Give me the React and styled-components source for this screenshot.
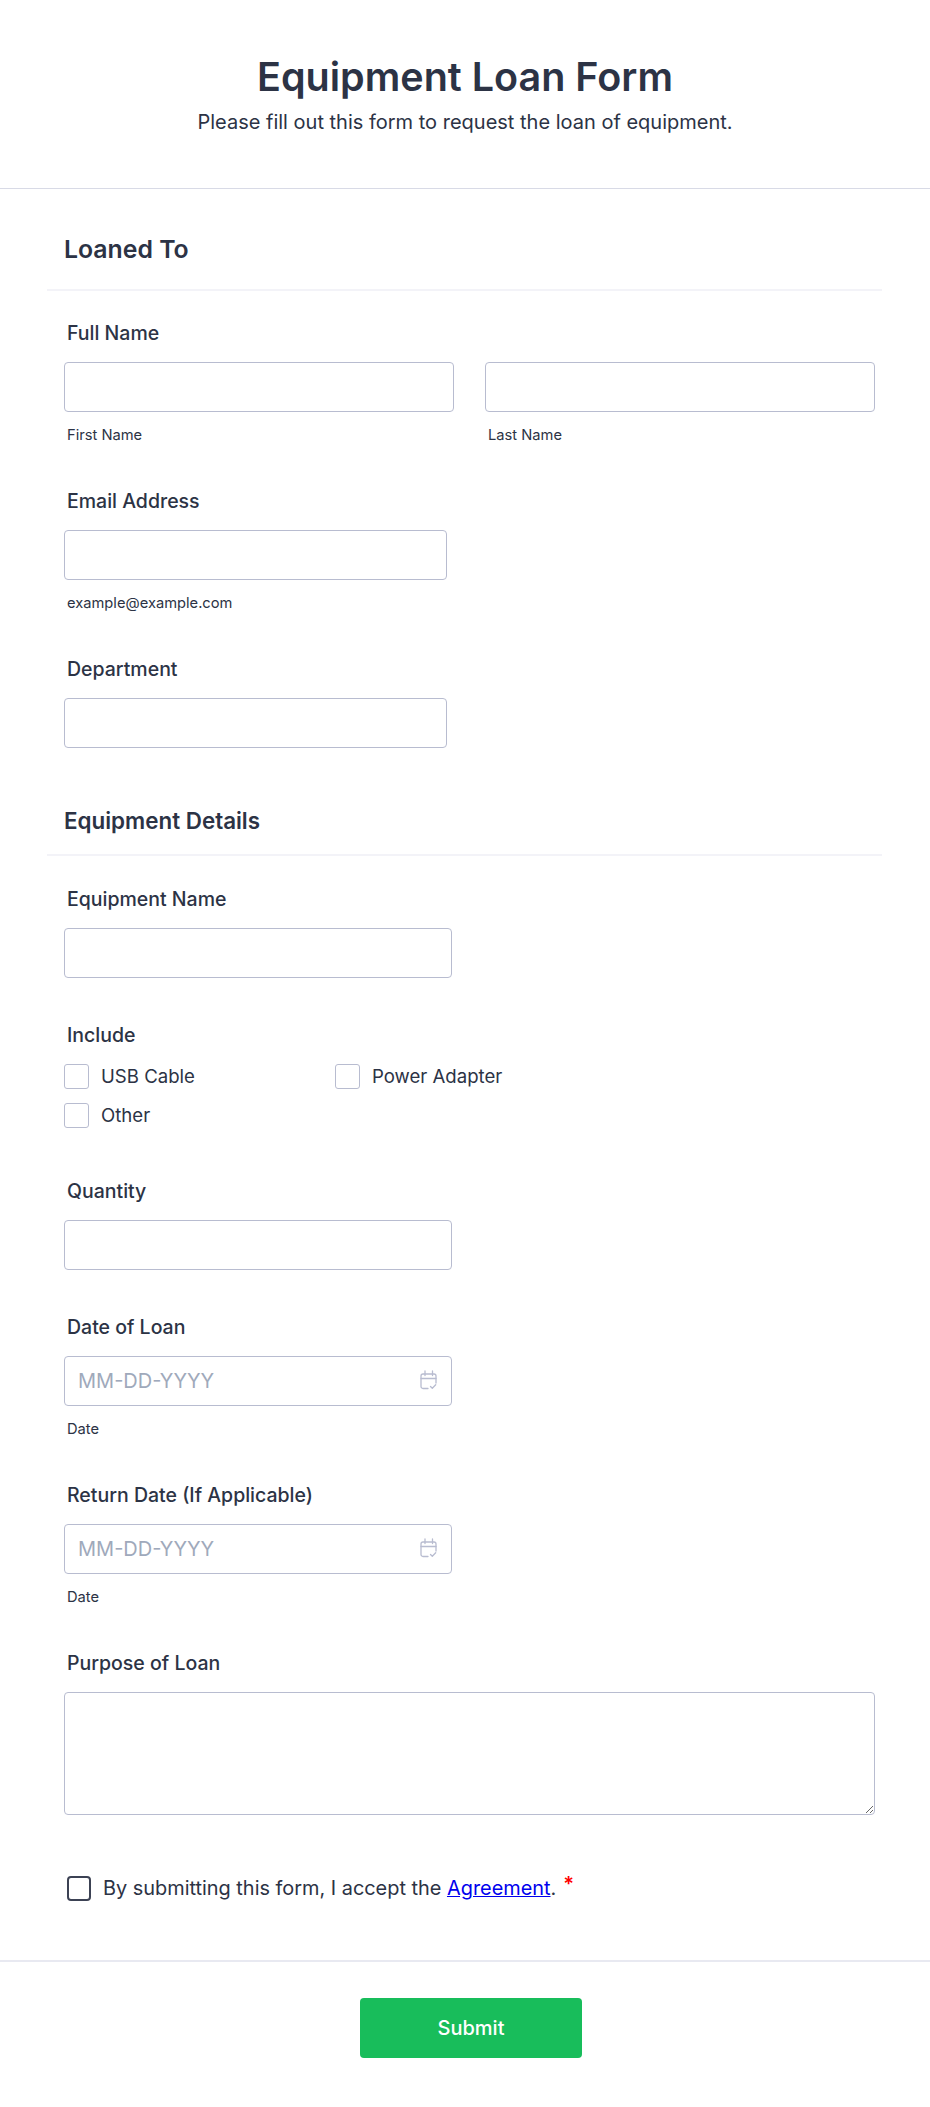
import React from 'react';
import styled, { createGlobalStyle } from 'styled-components';

const GlobalStyle = createGlobalStyle`
  html, body {
    margin: 0;
    padding: 0;
    background: #fff;
  }
  body {
    font-family: Inter, "Noto Sans", sans-serif;
    color: #2c3345;
  }
  * {
    box-sizing: border-box;
  }
`;

const CalendarIcon = () => (
  <DateIcon viewBox="0 0 17 20" fill="none" stroke="currentColor" strokeWidth="1.3" strokeLinecap="round" strokeLinejoin="round">
    <path d="M8 18.5H3a2 2 0 0 1-2-2V6a2 2 0 0 1 2-2h11a2 2 0 0 1 2 2v7" />
    <path d="M1 8.5h15" />
    <path d="M5 1v4.5M12.5 1v4.5" />
    <path d="M10.5 16.5l1.8 1.8 3.4-3.5" />
  </DateIcon>
);

const App = () => {
  return (
    <Page>
      <GlobalStyle />
      <Header>
        <Title>Equipment Loan Form</Title>
        <Subtitle>Please fill out this form to request the loan of equipment.</Subtitle>
      </Header>

      <Form onSubmit={(event) => event.preventDefault()}>
        <SectionHead>
          <SectionTitle>Loaned To</SectionTitle>
        </SectionHead>
        <Fields>
          <Field>
            <Label>Full Name</Label>
            <NameRow>
              <div>
                <Input type="text" />
                <SubLabel>First Name</SubLabel>
              </div>
              <div>
                <Input type="text" />
                <SubLabel>Last Name</SubLabel>
              </div>
            </NameRow>
          </Field>
          <Field>
            <Label>Email Address</Label>
            <Input type="email" width="383px" />
            <SubLabel>example@example.com</SubLabel>
          </Field>
          <Field>
            <Label>Department</Label>
            <Input type="text" width="383px" />
          </Field>
        </Fields>

        <SectionHead $later>
          <SectionTitle $later>Equipment Details</SectionTitle>
        </SectionHead>
        <Fields $later>
          <Field>
            <Label>Equipment Name</Label>
            <Input type="text" width="388px" />
          </Field>
          <Field $loose>
            <Label>Include</Label>
            <Options>
              <Option>
                <Checkbox type="checkbox" />
                USB Cable
              </Option>
              <Option>
                <Checkbox type="checkbox" />
                Power Adapter
              </Option>
              <Option>
                <Checkbox type="checkbox" />
                Other
              </Option>
            </Options>
          </Field>
          <Field>
            <Label>Quantity</Label>
            <Input type="text" width="388px" />
          </Field>
          <Field>
            <Label>Date of Loan</Label>
            <DateWrap>
              <Input type="text" placeholder="MM-DD-YYYY" />
              <CalendarIcon />
            </DateWrap>
            <SubLabel>Date</SubLabel>
          </Field>
          <Field>
            <Label>Return Date (If Applicable)</Label>
            <DateWrap>
              <Input type="text" placeholder="MM-DD-YYYY" />
              <CalendarIcon />
            </DateWrap>
            <SubLabel>Date</SubLabel>
          </Field>
          <Field>
            <Label>Purpose of Loan</Label>
            <TextArea />
          </Field>
          <Agreement>
            <AgreementBox type="checkbox" />
            <span>
              By submitting this form, I accept the <AgreementLink href="#agreement">Agreement</AgreementLink>.
            </span>
            <Required>*</Required>
          </Agreement>
        </Fields>
      </Form>

      <Footer>
        <SubmitButton type="submit">Submit</SubmitButton>
      </Footer>
    </Page>
  );
};

export default App;

const Page = styled.div`
  width: 930px;
  background: #fff;
`;

const Header = styled.header`
  height: 189px;
  padding-top: 53px;
  border-bottom: 1px solid #d8dae6;
  text-align: center;
`;

const Title = styled.h1`
  margin: 0;
  font-size: 39.5px;
  line-height: 48px;
  font-weight: 600;
  color: #2c3345;
`;

const Subtitle = styled.p`
  margin: 7px 0 0;
  font-size: 20px;
  line-height: 28px;
  font-weight: 400;
  color: #2c3345;
`;

const Form = styled.form`
  padding: 44px 48px 0 47px;
`;

const SectionHead = styled.div`
  height: ${(props) => (props.$later ? '51px' : '58px')};
  margin-top: ${(props) => (props.$later ? '57px' : '0')};
  padding-left: 17px;
  border-bottom: 2px solid #f3f3f8;
`;

const SectionTitle = styled.h2`
  margin: 0;
  font-size: ${(props) => (props.$later ? '22.4px' : '24.8px')};
  line-height: 32px;
  font-weight: 600;
  color: #2c3345;
`;

const Fields = styled.div`
  padding: ${(props) => (props.$later ? '32px' : '31px')} 7px 0 17px;
`;

const Field = styled.div`
  margin-bottom: ${(props) => (props.$loose ? '52px' : '46px')};
`;

const Label = styled.label`
  display: block;
  margin-bottom: 18px;
  padding-left: 3px;
  font-size: 19.5px;
  line-height: 22px;
  font-weight: 500;
  color: #2c3345;
`;

const NameRow = styled.div`
  display: grid;
  grid-template-columns: 1fr 1fr;
  column-gap: 31px;
`;

const Input = styled.input`
  display: block;
  width: ${(props) => props.width || '100%'};
  height: 50px;
  padding: 0 13px;
  border: 1px solid #b8bcd0;
  border-radius: 4px;
  background: #fff;
  font-family: inherit;
  font-size: 20px;
  color: #2c3345;
  outline: none;

  &::placeholder {
    color: #8894ab;
    opacity: 0.8;
  }
`;

const SubLabel = styled.div`
  margin-top: 14px;
  padding-left: 3px;
  font-size: 14.7px;
  line-height: 18px;
  color: #2c3345;
`;

const DateWrap = styled.div`
  position: relative;
  width: 388px;
`;

const DateIcon = styled.svg`
  position: absolute;
  top: 14px;
  right: 15px;
  width: 17px;
  height: 20px;
  color: #b8bcd0;
`;

const Options = styled.div`
  display: grid;
  grid-template-columns: 271px 271px;
  row-gap: 14px;
`;

const Option = styled.label`
  display: flex;
  align-items: center;
  gap: 12px;
  height: 25px;
  font-size: 18.6px;
  line-height: 25px;
  font-weight: 400;
  color: #2c3345;
`;

const Checkbox = styled.input`
  appearance: none;
  flex: none;
  width: 25px;
  height: 25px;
  margin: 0;
  border: 1px solid #b8bcd0;
  border-radius: 3px;
  background: #fff;
`;

const TextArea = styled.textarea`
  display: block;
  width: 100%;
  height: 123px;
  padding: 10px 13px;
  border: 1px solid #b8bcd0;
  border-radius: 4px;
  background: #fff;
  font-family: inherit;
  font-size: 18px;
  outline: none;
`;

const Agreement = styled.label`
  display: flex;
  align-items: center;
  height: 25px;
  margin: 61px 0 0 3px;
  font-size: 19.9px;
  line-height: 25px;
  color: #2c3345;
`;

const AgreementBox = styled.input`
  appearance: none;
  flex: none;
  width: 24px;
  height: 25px;
  margin: 0 12px 0 0;
  border: 2px solid #3c4254;
  border-radius: 4px;
  background: #fff;
`;

const AgreementLink = styled.a`
  color: #0000ee;
  text-decoration: underline;
`;

const Required = styled.span`
  margin: -8px 0 0 7px;
  font-size: 20px;
  font-weight: 600;
  color: #f00;
`;

const Footer = styled.footer`
  display: flex;
  justify-content: center;
  height: 147px;
  margin-top: 59px;
  padding: 36px 0 0 12px;
  border-top: 2px solid #e8e9f1;
`;

const SubmitButton = styled.button`
  width: 222px;
  height: 60px;
  border: none;
  border-radius: 4px;
  background: #18bd5b;
  font-family: inherit;
  font-size: 20px;
  font-weight: 500;
  color: #fff;
`;
